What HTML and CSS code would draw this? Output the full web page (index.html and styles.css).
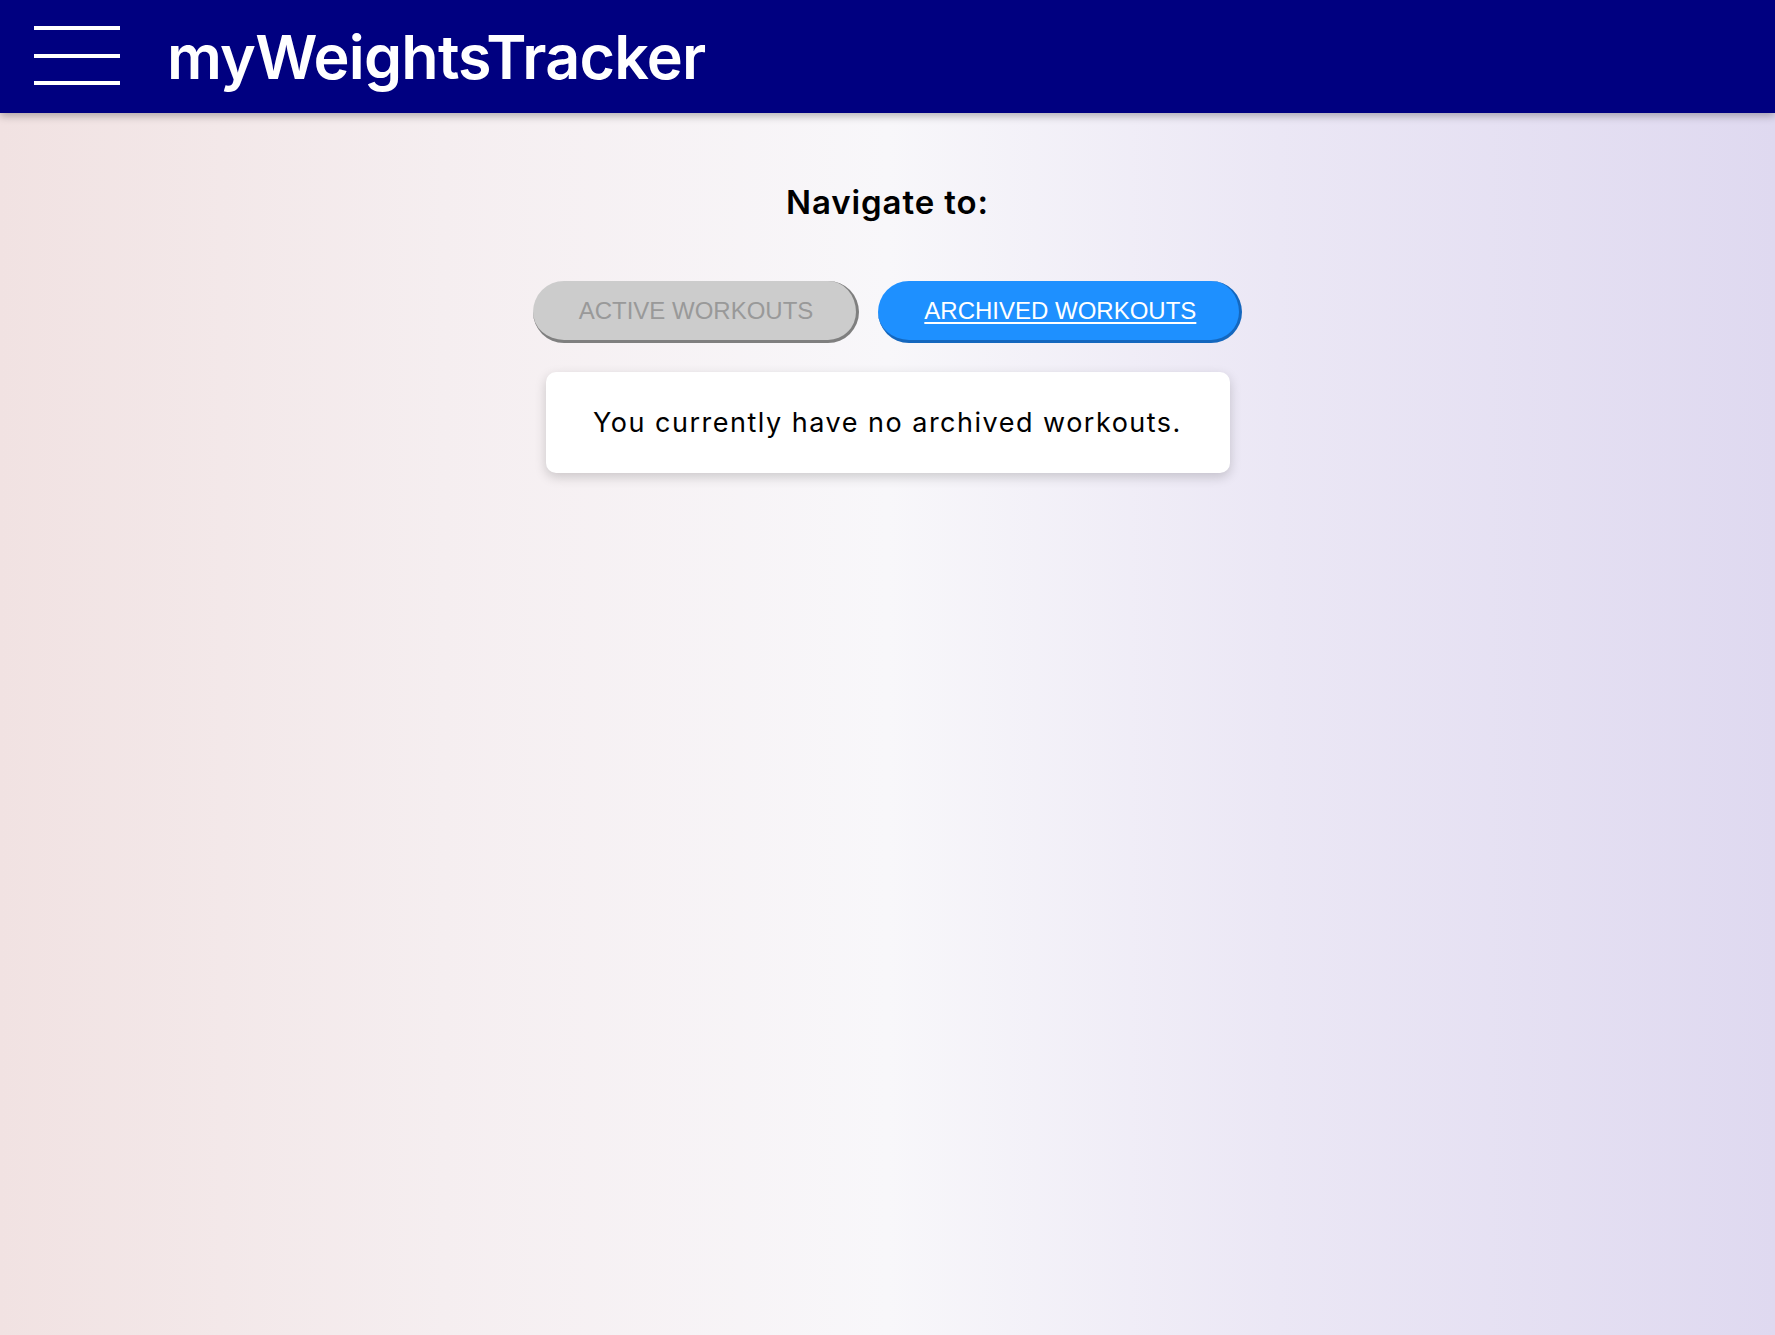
FILE: index.html
```html
<!DOCTYPE html>
<html lang="en">
<head>
<meta charset="utf-8">
<title>myWeightsTracker</title>
<link rel="stylesheet" href="styles.css">
</head>
<body>
<header class="topbar">
  <button class="menu-toggle" aria-label="Open menu">
    <span class="bar"></span>
    <span class="bar"></span>
    <span class="bar"></span>
  </button>
  <h1 class="brand">myWeightsTracker</h1>
</header>
<main class="page">
  <h2 class="nav-title">Navigate to:</h2>
  <nav class="switcher">
    <a class="pill pill-inactive">ACTIVE WORKOUTS</a>
    <a class="pill pill-active" href="#">ARCHIVED WORKOUTS</a>
  </nav>
  <section class="notice">
    <p>You currently have no archived workouts.</p>
  </section>
</main>
</body>
</html>
```

FILE: styles.css
```css
* { box-sizing: border-box; }

html, body {
  margin: 0;
  min-height: 100%;
}

body {
  min-height: 1335px;
  font-family: "Inter", "Open Sans", sans-serif;
  background: linear-gradient(90deg, #f1e2e2 0%, #f5eef0 25%, #f8f7fa 50%, #ebe7f5 72%, #dfd9f0 100%);
}

.topbar {
  height: 113px;
  background: #000080;
  display: flex;
  align-items: center;
  padding-left: 34px;
  box-shadow: 0 3px 8px rgba(0, 0, 0, 0.28);
  position: relative;
}

.menu-toggle {
  width: 86px;
  height: 59px;
  padding: 0;
  border: 0;
  background: transparent;
  display: flex;
  flex-direction: column;
  justify-content: space-between;
  margin-top: -2px;
}

.menu-toggle .bar {
  display: block;
  width: 86px;
  height: 4px;
  background: #ffffff;
}

.brand {
  margin: 1px 0 0 47px;
  color: #ffffff;
  font-family: "Inter", sans-serif;
  font-weight: 600;
  font-size: 61px;
  letter-spacing: -0.8px;
  line-height: 1;
}

.page {
  display: flex;
  flex-direction: column;
  align-items: center;
  padding-top: 69px;
}

.nav-title {
  margin: 0;
  font-family: "Inter", sans-serif;
  font-weight: 600;
  font-size: 33px;
  line-height: 40px;
  color: #000000;
  letter-spacing: 0.9px;
}

.switcher {
  display: flex;
  gap: 19px;
  margin-top: 59px;
}

.pill {
  height: 62px;
  border-radius: 31px;
  padding: 0 43px 0 46px;
  display: flex;
  align-items: center;
  font-family: "Liberation Sans", Arial, sans-serif;
  font-size: 24px;
  border: 0;
  border-right: 3px solid;
  border-bottom: 3px solid;
}

.pill-inactive {
  background: #cccccc;
  color: #999999;
  border-color: #7f7f7f;
}

.pill-active {
  background: #1e90ff;
  color: #ffffff;
  text-decoration: underline;
  text-underline-offset: 3px;
  border-color: #1467be;
}

.notice {
  margin-top: 29px;
  width: 684px;
  height: 101px;
  background: #ffffff;
  border-radius: 10px;
  box-shadow: 0 4px 12px rgba(0, 0, 0, 0.18);
  display: flex;
  align-items: center;
  justify-content: center;
}

.notice p {
  margin: 0;
  font-family: "Inter", sans-serif;
  font-size: 27px;
  letter-spacing: 1.5px;
  color: #000000;
}
```
